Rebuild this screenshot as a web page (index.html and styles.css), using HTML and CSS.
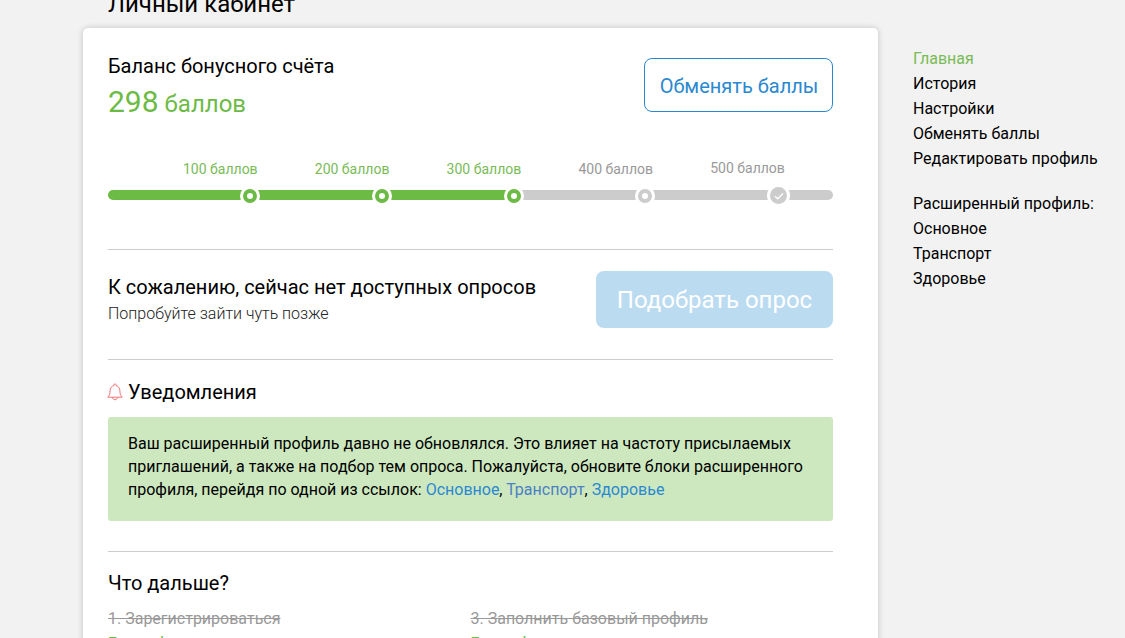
FILE: index.html
```html
<!DOCTYPE html>
<html lang="ru">
<head>
<meta charset="utf-8">
<title>Личный кабинет</title>
<link rel="stylesheet" href="styles.css">
</head>
<body>
<div class="page">
  <main class="main">
    <h1 class="title">Личный кабинет</h1>
    <div class="card">
      <section class="balance">
        <div>
          <div class="balance-label">Баланс бонусного счёта</div>
          <div class="balance-value"><span class="num">298</span> баллов</div>
        </div>
        <a class="btn-outline">Обменять баллы</a>
      </section>
      <section class="progress">
        <div class="marks">
          <span class="mark on">100 баллов</span>
          <span class="mark on">200 баллов</span>
          <span class="mark on">300 баллов</span>
          <span class="mark">400 баллов</span>
          <span class="mark up">500 баллов</span>
        </div>
        <div class="bar">
          <div class="seg on first"></div>
          <span class="dot on"></span>
          <div class="seg on"></div>
          <span class="dot on"></span>
          <div class="seg on"></div>
          <span class="dot on"></span>
          <div class="seg"></div>
          <span class="dot"></span>
          <div class="seg"></div>
          <span class="dot check"><svg width="10" height="8" viewBox="0 0 10 8"><path d="M1 4.200 3.700 6.800 9 1.400" fill="none" stroke="#fff" stroke-width="1.400"/></svg></span>
          <div class="seg last"></div>
        </div>
      </section>
      <section class="survey">
        <div>
          <div class="survey-title">К сожалению, сейчас нет доступных опросов</div>
          <div class="survey-sub">Попробуйте зайти чуть позже</div>
        </div>
        <a class="btn-fill">Подобрать опрос</a>
      </section>
      <section class="notes">
        <h2 class="notes-title"><svg class="bell" width="16" height="18" viewBox="0 0 16 18"><path d="M8 .8c.6 0 1 .4 1 1v.8c2.500.5 3.900 2.600 3.900 5.200 0 3.200.6 4.700 2.400 6.400H.7c1.800-1.700 2.400-3.200 2.400-6.400 0-2.600 1.400-4.700 3.900-5.200v-.8c0-.6.4-1 1-1ZM5.600 14.200c0 1.500 1 2.500 2.400 2.500s2.400-1 2.400-2.500" fill="none" stroke="#f07474" stroke-width="1"/></svg>Уведомления</h2>
        <div class="notice">Ваш расширенный профиль давно не обновлялся. Это влияет на частоту присылаемых приглашений, а также на подбор тем опроса. Пожалуйста, обновите блоки расширенного профиля, перейдя по одной из ссылок: <a>Основное</a>, <a class="visited">Транспорт</a>, <a>Здоровье</a></div>
      </section>
      <section class="next">
        <h2 class="next-title">Что дальше?</h2>
        <div class="steps">
          <div class="step"><div class="step-name">1. Зарегистрироваться</div><div class="step-bonus">Бонус фиксирован</div></div>
          <div class="step"><div class="step-name">3. Заполнить базовый профиль</div><div class="step-bonus">Бонус фиксирован</div></div>
        </div>
      </section>
    </div>
  </main>
  <nav class="side">
    <ul class="menu">
      <li class="active">Главная</li>
      <li>История</li>
      <li>Настройки</li>
      <li>Обменять баллы</li>
      <li>Редактировать профиль</li>
    </ul>
    <ul class="menu second">
      <li>Расширенный профиль:</li>
      <li>Основное</li>
      <li>Транспорт</li>
      <li>Здоровье</li>
    </ul>
  </nav>
</div>
</body>
</html>
```
FILE: styles.css
```css
* { box-sizing: border-box; }
html, body { margin: 0; height: 100%; overflow: hidden; }
body { background: #f2f2f2; font-family: Roboto, "Liberation Sans", sans-serif; color: #000; }
.page { display: flex; align-items: flex-start; margin-top: -10px; padding-left: 83px; }
.main { width: 795px; flex: none; }
.title { margin: 0 0 10px 25px; font-size: 24px; font-weight: 400; line-height: 28px; }
.side { margin-left: 35px; padding-top: 56px; }
.card { background: #fff; border-radius: 5px; box-shadow: 0 0 6px rgba(0,0,0,.2); padding: 0 45px 40px 25px; }
.balance { display: flex; justify-content: space-between; padding-top: 26px; height: 114px; }
.balance-label { font-size: 20px; line-height: 24px; }
.balance-value { font-size: 24px; line-height: 36px; color: #6cbb45; margin-top: 6px; }
.num { font-size: 30px; }
.btn-outline { margin-top: 4px; width: 189px; height: 54px; padding: 2px 0 0 1px; border: 1px solid #2a88d0; border-radius: 8px; color: #2a88d0; font-size: 20px; display: flex; align-items: center; justify-content: center; }
.progress { height: 108px; border-bottom: 1px solid #ccc; }
.marks { display: flex; padding-left: 75px; padding-top: 18px; height: 43px; }
.mark { flex: none; width: 131.800px; font-size: 14px; line-height: 18px; color: #999; white-space: nowrap; }
.mark.on { color: #78bb57; }
.mark.up { margin-top: -1px; }
.bar { display: flex; align-items: center; height: 20px; }
.seg { height: 10px; background: #ccc; flex: 0 0 117.750px; }
.seg.first { flex-basis: 135px; border-radius: 5px 0 0 5px; }
.seg.on { background: #6cbb45; }
.seg.last { flex: 1; border-radius: 0 5px 5px 0; }
.dot { position: relative; width: 14px; height: 14px; margin-top: 1px; border-radius: 50%; border: 4px solid #ccc; background: #fff; box-shadow: 0 0 0 3px #fff; flex: none; display: flex; align-items: center; justify-content: center; }
.dot.on { border-color: #6cbb45; }
.dot.check { width: 17px; height: 17px; background: #ccc; border: 0; }
.survey { display: flex; justify-content: space-between; align-items: flex-start; height: 110px; padding-top: 21px; border-bottom: 1px solid #ccc; }
.survey-title { font-size: 20px; line-height: 24px; margin-top: 4px; }
.survey-sub { font-size: 16px; font-weight: 300; line-height: 20px; margin-top: 5px; color: #222; }
.btn-fill { width: 237px; height: 57px; border-radius: 8px; background: #bbdbf1; color: #fff; font-size: 24px; display: flex; align-items: center; justify-content: center; }
.notes { height: 192px; border-bottom: 1px solid #ccc; padding-top: 19px; }
.notes-title { margin: 0; font-size: 20px; font-weight: 400; line-height: 26px; display: flex; align-items: center; gap: 5px; }
.bell { margin-left: -1px; }
.notice { margin-top: 12px; height: 104px; background: #cde8bf; border-radius: 3px; padding: 15px 20px; font-size: 16px; line-height: 23px; }
.notice a { color: #2a88d0; }
.notice a.visited { color: #4b80c4; }
.next { padding-top: 18px; }
.next-title { margin: 0; font-size: 20px; font-weight: 400; line-height: 26px; }
.steps { display: flex; margin-top: 13px; }
.step { width: 363px; }
.step-name { font-size: 16px; line-height: 20px; color: #999; text-decoration: line-through; }
.step-bonus { font-size: 16px; line-height: 20px; color: #6cbb45; margin-top: 5px; }
.menu { list-style: none; margin: 0; padding: 0; font-size: 16px; line-height: 25px; white-space: nowrap; }
.menu .active { color: #78bb57; }
.second { margin-top: 20px; }
```
